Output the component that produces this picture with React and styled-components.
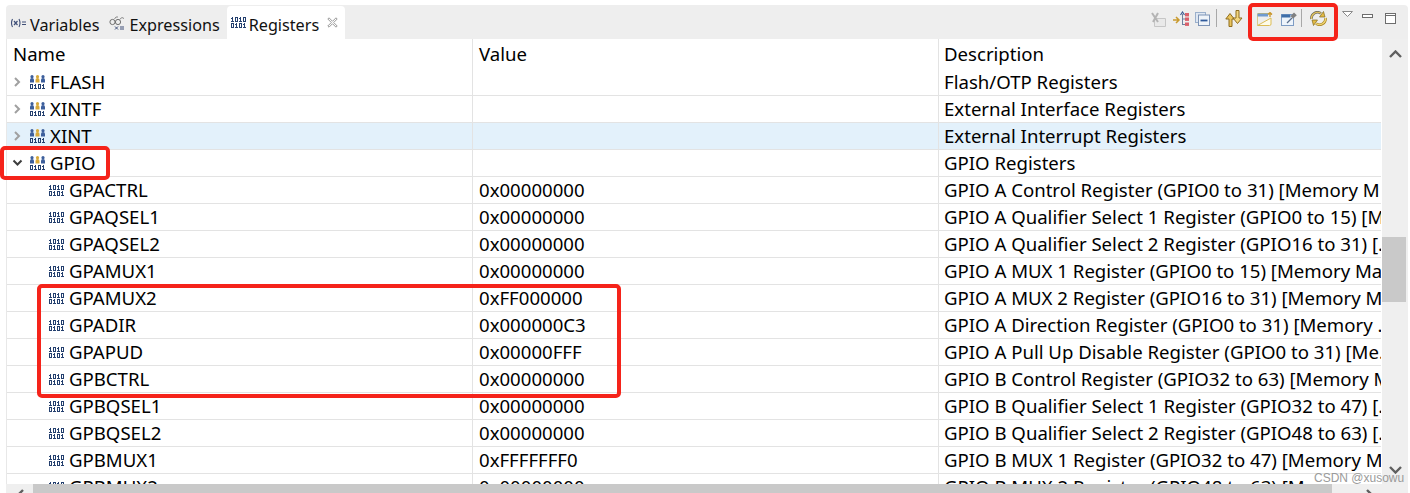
import React from 'react'
import styled, { createGlobalStyle } from 'styled-components'

const GlobalStyle = createGlobalStyle`
  html, body {
    background: #fff;
    margin: 0;
    overflow: hidden;
  }
`

const Page = styled.div`
  box-sizing: border-box;
  color: #000;
  display: flex;
  flex-direction: column;
  font-family: 'Noto Sans', sans-serif;
  font-size: 18.6px;
  height: 493px;
  overflow: hidden;
  padding: 5px 2px 0 6px;
  position: relative;
  width: 1410px;
`

const TabBar = styled.div`
  align-items: flex-end;
  background: #eee;
  border-radius: 4px 4px 0 0;
  display: flex;
  flex: none;
  font-size: 16.2px;
  height: 34px;
`

const Tab = styled.div`
  align-items: center;
  background: ${(p) => (p.$active ? '#fff' : 'transparent')};
  border-radius: 4px 4px 0 0;
  display: flex;
  gap: ${(p) => (p.$active ? 3 : 4)}px;
  height: 33px;
  margin-left: ${(p) => p.$left}px;
  padding: 0 ${(p) => (p.$active ? 7 : 0)}px 0 ${(p) => (p.$active ? 4 : 0)}px;
`

const TabLabel = styled.span`
  color: #111;
  line-height: 24px;
  margin-right: ${(p) => p.$right || 0}px;
  padding-top: 4px;
`

const Toolbar = styled.div`
  align-items: flex-start;
  align-self: stretch;
  display: flex;
  margin-left: auto;
  padding-right: 12px;
`

const ToolIcon = styled.svg`
  display: block;
  flex: none;
  margin-left: ${(p) => p.$left}px;
  margin-top: ${(p) => p.$top}px;
`

const Separator = styled.span`
  background: #a8a8a8;
  display: block;
  flex: none;
  height: 18px;
  margin-left: ${(p) => p.$left}px;
  margin-top: 4px;
  width: 1px;
`

const Body = styled.div`
  display: flex;
  flex: none;
  height: 445px;
`

const Table = styled.div`
  border-left: 1px solid #e8e8e8;
  box-sizing: border-box;
  flex: none;
  overflow: hidden;
  width: 1376px;
`

const Row = styled.div`
  background: ${(p) => (p.$selected ? '#e3f1fb' : '#fff')};
  border-bottom: ${(p) => (p.$header ? 'none' : '1px solid #e3e3e3')};
  box-sizing: border-box;
  display: grid;
  grid-template-columns: 466px 466px 442px;
  height: ${(p) => (p.$header ? 30 : 27)}px;
  width: 1374px;
`

const Cell = styled.div`
  align-items: center;
  border-right: ${(p) => (p.$last ? 'none' : '1px solid #e3e3e3')};
  box-sizing: border-box;
  display: flex;
  overflow: hidden;
  padding-left: ${(p) => p.$indent || 5}px;
  white-space: nowrap;
`

const CellText = styled.span`
  margin-bottom: 2px;
`

const Twist = styled.svg`
  display: block;
  flex: none;
  margin-right: 7px;
`

const RowIcon = styled.svg`
  display: block;
  flex: none;
  margin-right: ${(p) => p.$gap || 0}px;
`

const VScroll = styled.div`
  align-items: center;
  background: #efefef;
  display: flex;
  flex-direction: column;
  flex: none;
  width: 26px;
`

const Thumb = styled.div`
  align-self: flex-start;
  background: #c9c9c9;
  flex: none;
  height: 65px;
  margin-top: 179px;
  width: 24px;
`

const ScrollArrow = styled.svg`
  display: block;
  flex: none;
  margin-top: ${(p) => p.$top}px;
`

const HScroll = styled.div`
  display: flex;
  flex: none;
  height: 26px;
`

const HEnd = styled.div`
  background: #efefef;
  display: flex;
  flex: none;
  justify-content: center;
  padding-top: 5px;
  width: ${(p) => p.$width}px;
`

const HThumb = styled.div`
  background: #c9c9c9;
  flex: 1;
`

const Callout = styled.div`
  border: 4px solid #f5231a;
  border-radius: 5px;
  box-sizing: border-box;
  height: ${(p) => p.$h}px;
  left: ${(p) => p.$x}px;
  position: absolute;
  top: ${(p) => p.$y}px;
  width: ${(p) => p.$w}px;
`

const Watermark = styled.div`
  color: #9a9a9a;
  font-family: 'Liberation Sans', sans-serif;
  font-size: 12px;
  left: 1314px;
  line-height: 14px;
  position: absolute;
  top: 471px;
`

const DIGITS = {
  0: ['111', '101', '101', '101', '111'],
  1: ['010', '110', '010', '010', '111']
}

// tiny pixel art used by the register icons
function Bits({ code, x = 0, y = 0, color = '#233f6e' }) {
  const cells = []
  code.split('').forEach((d, i) => {
    DIGITS[d].forEach((line, r) => {
      line.split('').forEach((on, c) => {
        if (on === '1') {
          cells.push(<rect key={`${i}-${r}-${c}`} x={x + i * 4 + c} y={y + r} width="1" height="1" fill={color} />)
        }
      })
    })
  })
  return <>{cells}</>
}

const RegisterIcon = ({ gap }) => (
  <RowIcon $gap={gap} width="15" height="11" viewBox="0 0 15 11" shapeRendering="crispEdges">
    <Bits code="1010" />
    <Bits code="0101" y={6} />
  </RowIcon>
)

function Person({ x, color }) {
  return (
    <>
      <circle cx={x + 2} cy="1.7" r="1.6" fill={color} />
      <path d={`M${x} 7.5 L${x} 5 Q${x} 3 ${x + 2} 3 Q${x + 4} 3 ${x + 4} 5 L${x + 4} 7.5 Z`} fill={color} />
    </>
  )
}

const GroupIcon = () => (
  <RowIcon $gap={5} width="15" height="15" viewBox="0 0 15 15">
    <Person x={0} color="#3d5f9c" />
    <Person x={5.5} color="#d8a93a" />
    <Person x={11} color="#3d5f9c" />
    <g shapeRendering="crispEdges">
      <Bits code="0101" y={9} />
    </g>
  </RowIcon>
)

const Chevron = ({ open }) =>
  open ? (
    <Twist width="11" height="8" viewBox="0 0 11 8">
      <path d="M1.5 1.5 L5.5 5.5 L9.5 1.5" fill="none" stroke="#3d3d3d" strokeWidth="2" />
    </Twist>
  ) : (
    <Twist width="11" height="10" viewBox="0 0 11 10">
      <path d="M3 1 L7 5 L3 9" fill="none" stroke="#a0a0a0" strokeWidth="2" />
    </Twist>
  )

const VariablesIcon = () => (
  <svg width="16" height="10" viewBox="0 0 16 10">
    <path d="M2.5 1 Q0.5 5 2.5 9 M9 1 Q11 5 9 9" fill="none" stroke="#3f4f78" strokeWidth="1.1" />
    <path d="M4 3 L7.5 7 M7.5 3 L4 7" stroke="#3f4f78" strokeWidth="1.2" />
    <path d="M12 4 H16 M12 6.5 H16" stroke="#3f4f78" strokeWidth="1.1" />
  </svg>
)

const ExpressionsIcon = () => (
  <svg width="16" height="14" viewBox="0 0 16 14">
    <circle cx="3.5" cy="6" r="2.6" fill="none" stroke="#6f6f6f" />
    <circle cx="9" cy="6" r="2.6" fill="none" stroke="#6f6f6f" />
    <path d="M5.5 3 L7 1 L9 1 M10.5 3.5 L13 1.5 L15 2.5" fill="none" stroke="#8a8a8a" />
    <path d="M6 10.5 L9 13.5 M9 10.5 L6 13.5 M11 11 H15 M11 13 H15" stroke="#3f4f78" />
  </svg>
)

const CloseIcon = () => (
  <svg width="11" height="11" viewBox="0 0 11 11">
    <path d="M2 0.8 L5.5 4.3 L9 0.8 L10.2 2 L6.7 5.5 L10.2 9 L9 10.2 L5.5 6.7 L2 10.2 L0.8 9 L4.3 5.5 L0.8 2 Z" fill="#fff" stroke="#9a9a9a" />
  </svg>
)

const Tools = () => (
  <Toolbar>
    <ToolIcon $left={0} $top={7} width="17" height="15" viewBox="0 0 17 15">
      <path d="M4.5 6.5 H15.5 V14.5 H4.5 Z" fill="#e9e9e9" stroke="#c6c6c6" />
      <path d="M2 1 L8 10 M8 1 L3 10" stroke="#b4b4b4" strokeWidth="2" />
    </ToolIcon>
    <ToolIcon $left={6} $top={6} width="16" height="16" viewBox="0 0 16 16">
      <path d="M0 9 H5 M3 6 L6 9 L3 12" fill="none" stroke="#c99a2e" strokeWidth="1.5" />
      <path d="M9.5 3 V14 M9.5 8 H12 M9.5 13.5 H12" fill="none" stroke="#6d7f9d" />
      <path d="M7.5 4 L9.5 1 L11.5 4" fill="none" stroke="#3f5f93" strokeWidth="1.2" />
      <rect x="12" y="2" width="4" height="3.4" fill="#d9606a" />
      <rect x="12" y="6.5" width="4" height="3.4" fill="#d9606a" />
      <rect x="12" y="11.5" width="4" height="3.4" fill="#d9606a" />
    </ToolIcon>
    <ToolIcon $left={6} $top={7} width="15" height="14" viewBox="0 0 15 14">
      <rect x="0.5" y="0.5" width="10" height="10" fill="#dfe7f2" stroke="#9bb0cc" />
      <rect x="3.5" y="3" width="11" height="10.5" fill="#eef3f9" stroke="#7c93b6" />
      <path d="M5.5 8.5 H12.5" stroke="#2f5a9b" strokeWidth="1.8" />
    </ToolIcon>
    <Separator $left={6} />
    <ToolIcon $left={8} $top={5} width="18" height="17" viewBox="0 0 18 17">
      <path d="M4 16.5 V9 H0.8 L5 3.5 L9.2 9 H7 V16.5 Z" fill="#e9c45d" stroke="#8f6c1c" />
      <path d="M11 0.5 V8 H8 L12.5 13.5 L17 8 H14 V0.5 Z" fill="#f2d680" stroke="#8f6c1c" />
    </ToolIcon>
    <ToolIcon $left={14} $top={7} width="16" height="14" viewBox="0 0 16 14">
      <path d="M0.5 1.5 H12 M14 6 V12 Q14 13.5 12.5 13.5 H0.5 Z" fill="#fdfbe9" stroke="#dcbc55" />
      <path d="M0.5 2 V13" stroke="#d8c98a" />
      <rect x="0.5" y="1.5" width="10.5" height="3" fill="#6f9ad0" />
      <path d="M13 0 V5 M11 2.5 L13 0.5 L15 2.5" fill="none" stroke="#c9962a" strokeWidth="1.3" />
    </ToolIcon>
    <ToolIcon $left={8} $top={7} width="16" height="14" viewBox="0 0 16 14">
      <rect x="0.5" y="2.5" width="12" height="11" fill="#eef4fb" stroke="#7e9cc4" />
      <rect x="0.5" y="2.5" width="9" height="3" fill="#3f6ea8" />
      <path d="M6 11 L11 6" stroke="#5a6e8c" strokeWidth="1.2" />
      <path d="M9.5 4 L13 0.5 L15.8 3.2 L12 6.8 Z" fill="#808080" />
    </ToolIcon>
    <Separator $left={4} />
    <ToolIcon $left={8} $top={6} width="17" height="15" viewBox="0 0 17 15">
      <path d="M1.5 8 A6 6 0 0 1 11 2.5" fill="none" stroke="#6e6a58" strokeWidth="2.6" />
      <path d="M1.5 8 A6 6 0 0 1 11 2.5" fill="none" stroke="#e6c65c" strokeWidth="1.2" />
      <path d="M15.5 7 A6 6 0 0 1 6 12.5" fill="none" stroke="#a8841f" strokeWidth="2.6" />
      <path d="M15.5 7 A6 6 0 0 1 6 12.5" fill="none" stroke="#f1d877" strokeWidth="1.2" />
      <path d="M9.5 6 L15 6 L13.5 0.5 Z" fill="#e3bb45" stroke="#7f6a20" strokeWidth="0.7" />
      <path d="M7.5 9 L2 9 L3.5 14.5 Z" fill="#e3bb45" stroke="#7f6a20" strokeWidth="0.7" />
    </ToolIcon>
    <ToolIcon $left={15} $top={6} width="11" height="6" viewBox="0 0 11 6">
      <path d="M0.5 0.5 H10.5 L5.5 5.5 Z" fill="#fff" stroke="#8a8a8a" />
    </ToolIcon>
    <ToolIcon $left={9} $top={9} width="11" height="4" viewBox="0 0 11 4">
      <rect x="0.5" y="0.5" width="10" height="3" fill="#fff" stroke="#6d6d6d" />
    </ToolIcon>
    <ToolIcon $left={12} $top={8} width="11" height="11" viewBox="0 0 11 11">
      <rect x="0.5" y="0.5" width="10" height="10" fill="#fff" stroke="#6d6d6d" />
      <path d="M0.5 2.5 H10.5" stroke="#6d6d6d" />
    </ToolIcon>
  </Toolbar>
)

const ROWS = [
  { name: 'FLASH', desc: 'Flash/OTP Registers', group: true },
  { name: 'XINTF', desc: 'External Interface Registers', group: true },
  { name: 'XINT', desc: 'External Interrupt Registers', group: true, selected: true },
  { name: 'GPIO', desc: 'GPIO Registers', group: true, open: true },
  { name: 'GPACTRL', value: '0x00000000', desc: 'GPIO A Control Register (GPIO0 to 31) [Memory M' },
  { name: 'GPAQSEL1', value: '0x00000000', desc: 'GPIO A Qualifier Select 1 Register (GPIO0 to 15) [M' },
  { name: 'GPAQSEL2', value: '0x00000000', desc: 'GPIO A Qualifier Select 2 Register (GPIO16 to 31) [..' },
  { name: 'GPAMUX1', value: '0x00000000', desc: 'GPIO A MUX 1 Register (GPIO0 to 15) [Memory Ma' },
  { name: 'GPAMUX2', value: '0xFF000000', desc: 'GPIO A MUX 2 Register (GPIO16 to 31) [Memory M' },
  { name: 'GPADIR', value: '0x000000C3', desc: 'GPIO A Direction Register (GPIO0 to 31) [Memory ..' },
  { name: 'GPAPUD', value: '0x00000FFF', desc: 'GPIO A Pull Up Disable Register (GPIO0 to 31) [Me..' },
  { name: 'GPBCTRL', value: '0x00000000', desc: 'GPIO B Control Register (GPIO32 to 63) [Memory M' },
  { name: 'GPBQSEL1', value: '0x00000000', desc: 'GPIO B Qualifier Select 1 Register (GPIO32 to 47) [..' },
  { name: 'GPBQSEL2', value: '0x00000000', desc: 'GPIO B Qualifier Select 2 Register (GPIO48 to 63) [..' },
  { name: 'GPBMUX1', value: '0xFFFFFFF0', desc: 'GPIO B MUX 1 Register (GPIO32 to 47) [Memory M' },
  { name: 'GPBMUX2', value: '0x00000000', desc: 'GPIO B MUX 2 Register (GPIO48 to 63) [M' }
]

export default function App() {
  return (
    <Page>
      <GlobalStyle />
      <TabBar>
        <Tab $left={4}>
          <VariablesIcon />
          <TabLabel>Variables</TabLabel>
        </Tab>
        <Tab $left={10}>
          <ExpressionsIcon />
          <TabLabel>Expressions</TabLabel>
        </Tab>
        <Tab $left={7} $active>
          <RegisterIcon />
          <TabLabel $right={5}>Registers</TabLabel>
          <CloseIcon />
        </Tab>
        <Tools />
      </TabBar>
      <Body>
        <Table>
          <Row $header>
            <Cell $indent={6}><CellText>Name</CellText></Cell>
            <Cell $indent={6}><CellText>Value</CellText></Cell>
            <Cell $last><CellText>Description</CellText></Cell>
          </Row>
          {ROWS.map((row) => (
            <Row key={row.name} $selected={row.selected}>
              <Cell $indent={row.group ? 5 : 42}>
                {row.group && <Chevron open={row.open} />}
                {row.group ? <GroupIcon /> : <RegisterIcon gap={5} />}
                <CellText>{row.name}</CellText>
              </Cell>
              <Cell $indent={6}><CellText>{row.value}</CellText></Cell>
              <Cell $last><CellText>{row.desc}</CellText></Cell>
            </Row>
          ))}
        </Table>
        <VScroll>
          <ScrollArrow $top={11} width="13" height="8" viewBox="0 0 13 8">
            <path d="M1 7 L6.5 1.5 L12 7" fill="none" stroke="#5f5f5f" strokeWidth="2.4" />
          </ScrollArrow>
          <Thumb />
          <ScrollArrow $top={164} width="13" height="8" viewBox="0 0 13 8">
            <path d="M1 1 L6.5 6.5 L12 1" fill="none" stroke="#5f5f5f" strokeWidth="2.4" />
          </ScrollArrow>
        </VScroll>
      </Body>
      <HScroll>
        <HEnd $width={27}>
          <ScrollArrow $top={0} width="8" height="13" viewBox="0 0 8 13">
            <path d="M7 1 L1.5 6.5 L7 12" fill="none" stroke="#5f5f5f" strokeWidth="2.4" />
          </ScrollArrow>
        </HEnd>
        <HThumb />
        <HEnd $width={76}>
          <ScrollArrow $top={0} width="8" height="13" viewBox="0 0 8 13">
            <path d="M1 1 L6.5 6.5 L1 12" fill="none" stroke="#5f5f5f" strokeWidth="2.4" />
          </ScrollArrow>
        </HEnd>
      </HScroll>
      <Callout $x={1248} $y={3} $w={90} $h={38} />
      <Callout $x={0} $y={146} $w={110} $h={34} />
      <Callout $x={37} $y={284} $w={584} $h={114} />
      <Watermark>CSDN @xusowu</Watermark>
    </Page>
  )
}
